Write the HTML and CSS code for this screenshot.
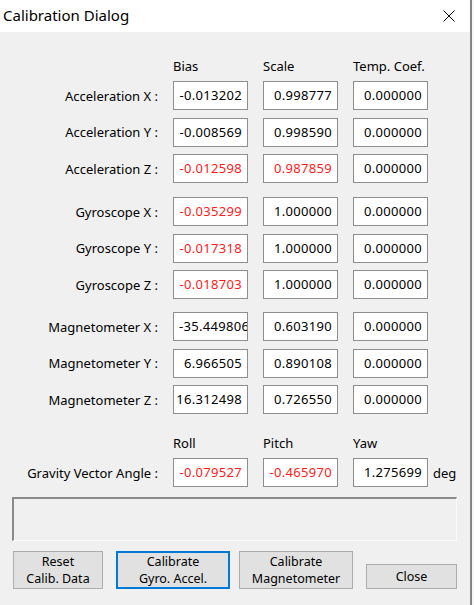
FILE: index.html
```html
<!DOCTYPE html>
<html>
<head>
<meta charset="utf-8">
<title>Calibration Dialog</title>
<link rel="stylesheet" href="styles.css">
</head>
<body>
<div class="screen">
  <div class="dialog">
    <div class="titlebar">
      <span class="title">Calibration Dialog</span>
      <svg class="close-x" width="12" height="12" viewBox="0 0 12 12"><path d="M0.5 0.5 L11.5 11.5 M11.5 0.5 L0.5 11.5" stroke="#000" stroke-width="1" fill="none"/></svg>
    </div>
    <div class="panel">
      <div class="row head">
        <span class="lbl"></span>
        <span class="colhead">Bias</span>
        <span class="colhead">Scale</span>
        <span class="colhead">Temp. Coef.</span>
      </div>
      <div class="group">
        <div class="row"><span class="lbl">Acceleration X :</span><span class="box">-0.013202</span><span class="box">0.998777</span><span class="box">0.000000</span></div>
        <div class="row"><span class="lbl">Acceleration Y :</span><span class="box">-0.008569</span><span class="box">0.998590</span><span class="box">0.000000</span></div>
        <div class="row"><span class="lbl">Acceleration Z :</span><span class="box red">-0.012598</span><span class="box red">0.987859</span><span class="box">0.000000</span></div>
      </div>
      <div class="group g2">
        <div class="row"><span class="lbl">Gyroscope X :</span><span class="box red">-0.035299</span><span class="box">1.000000</span><span class="box">0.000000</span></div>
        <div class="row"><span class="lbl">Gyroscope Y :</span><span class="box red">-0.017318</span><span class="box">1.000000</span><span class="box">0.000000</span></div>
        <div class="row"><span class="lbl">Gyroscope Z :</span><span class="box red">-0.018703</span><span class="box">1.000000</span><span class="box">0.000000</span></div>
      </div>
      <div class="group g3">
        <div class="row"><span class="lbl">Magnetometer X :</span><span class="box clip">-35.449806</span><span class="box">0.603190</span><span class="box">0.000000</span></div>
        <div class="row"><span class="lbl">Magnetometer Y :</span><span class="box">6.966505</span><span class="box">0.890108</span><span class="box">0.000000</span></div>
        <div class="row"><span class="lbl">Magnetometer Z :</span><span class="box">16.312498</span><span class="box">0.726550</span><span class="box">0.000000</span></div>
      </div>
      <div class="row head gravhead">
        <span class="lbl"></span>
        <span class="colhead">Roll</span>
        <span class="colhead">Pitch</span>
        <span class="colhead">Yaw</span>
      </div>
      <div class="row">
        <span class="lbl">Gravity Vector Angle :</span>
        <span class="box red">-0.079527</span>
        <span class="box red">-0.465970</span>
        <span class="box">1.275699</span>
        <span class="unit">deg</span>
      </div>
      <div class="status"></div>
      <div class="buttons">
        <button class="btn b-reset">Reset<br>Calib. Data</button>
        <button class="btn b-gyro focus">Calibrate<br>Gyro. Accel.</button>
        <button class="btn b-mag">Calibrate<br>Magnetometer</button>
        <button class="btn b-close">Close</button>
      </div>
    </div>
  </div>
  <div class="edge"></div>
  <div class="outside"></div>
</div>
</body>
</html>
```
FILE: styles.css
```css
html, body {
  margin: 0;
  padding: 0;
  width: 474px;
  height: 605px;
  overflow: hidden;
  background: #f6f6f6;
}
.screen {
  display: flex;
  width: 474px;
  height: 605px;
}
.dialog {
  width: 470px;
  height: 605px;
  display: flex;
  flex-direction: column;
  background: #f0f0f0;
  font-family: "Noto Sans", "DejaVu Sans", sans-serif;
  font-size: 13px;
  color: #000;
}
.edge {
  width: 2px;
  background: #858585;
}
.outside {
  flex: 1;
  background: #f7f7f7;
}
.titlebar {
  height: 32px;
  background: #fff;
  display: flex;
  align-items: center;
  justify-content: space-between;
  padding: 0 15px 0 3px;
}
.title {
  font-size: 15px;
  line-height: 20px;
  margin-top: -2px;
  color: #000;
}
.close-x {
  display: block;
}
.panel {
  flex: 1;
  display: flex;
  flex-direction: column;
  padding-top: 26px;
}
.row {
  display: flex;
  align-items: center;
  height: 29px;
}
.row.head {
  height: 16px;
  line-height: 16px;
  margin-bottom: 7px;
}
.gravhead {
  margin-top: 21px;
}
.lbl {
  width: 158px;
  text-align: right;
  white-space: nowrap;
  flex: none;
}
.colhead {
  width: 75px;
  margin-left: 15px;
  flex: none;
  white-space: nowrap;
}
.group {
  display: flex;
  flex-direction: column;
  gap: 7.5px;
}
.g2 { margin-top: 14px; }
.g3 { margin-top: 13px; }
.box {
  box-sizing: border-box;
  width: 75px;
  height: 29px;
  margin-left: 15px;
  flex: none;
  background: #fff;
  border: 1px solid #8e8e8e;
  line-height: 27px;
  text-align: right;
  padding-right: 5px;
  white-space: nowrap;
  overflow: hidden;
  font-size: 13px;
  letter-spacing: 0.3px;
}
.box.red { color: #ff1a1a; }
.box.clip {
  text-align: left;
  padding-left: 5px;
  padding-right: 0;
}
.unit {
  margin-left: 5px;
}
.status {
  box-sizing: border-box;
  margin: 10px 0 0 12px;
  width: 445px;
  height: 44px;
  border-top: 2px solid #8a8a8a;
  border-left: 2px solid #8a8a8a;
  border-right: 1px solid #fbfbfb;
  border-bottom: 1px solid #fbfbfb;
  background: #f0f0f0;
}
.buttons {
  display: flex;
  align-items: flex-end;
  margin-top: 10px;
  padding-left: 13px;
}
.btn {
  box-sizing: border-box;
  height: 38px;
  background: #e1e1e1;
  border: 1px solid #adadad;
  font-family: "Noto Sans", "DejaVu Sans", sans-serif;
  font-size: 12.5px;
  line-height: 17px;
  color: #000;
  padding: 0;
  margin: 0;
  text-align: center;
}
.btn.focus {
  border: 2px solid #0078d7;
}
.b-reset { width: 90px; }
.b-gyro { width: 114px; margin-left: 13px; }
.b-mag { width: 114px; margin-left: 9px; }
.b-close { width: 91px; height: 25px; margin-left: 13px; }
```
